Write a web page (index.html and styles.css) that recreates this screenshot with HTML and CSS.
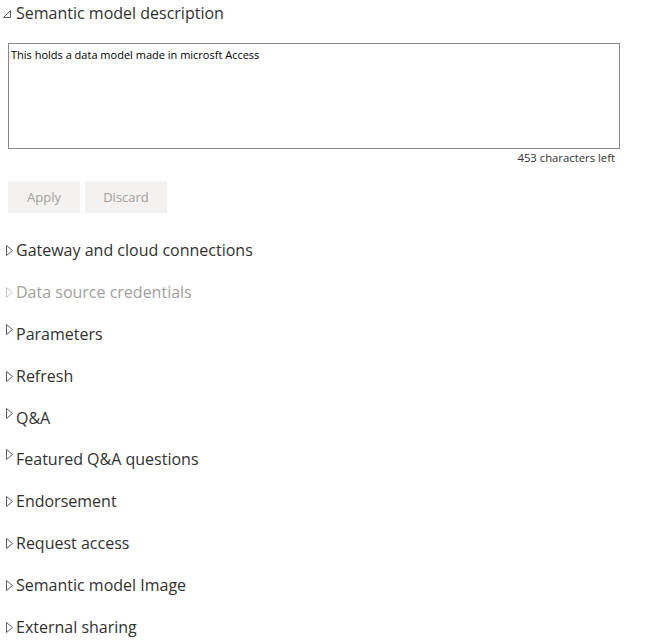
FILE: index.html
```html
<!DOCTYPE html>
<html lang="en">
  <head>
    <title>Semantic model settings</title>
    <meta name="viewport" content="width=device-width, initial-scale=1.0">
    <link rel="stylesheet" href="styles.css">
  </head>
  <body>
    <div class="section open">
      <div class="section-head">
        <svg class="chev-open" width="8" height="8" viewBox="0 0 8 8"><path d="M7.5 0.5 L7.5 7.5 L0.5 7.5 Z" fill="none" stroke="#605e5c" stroke-width="1"/></svg>
        <span>Semantic model description</span>
      </div>
      <div class="desc-box">
        <textarea class="desc-input">This holds a data model made in microsft Access</textarea>
        <div class="char-count">453 characters left</div>
      </div>
      <div class="btn-row">
        <button class="btn" disabled>Apply</button>
        <button class="btn" disabled>Discard</button>
      </div>
    </div>

    <div class="section-list">
      <div class="section-head"><svg class="chev" width="7" height="11" viewBox="0 0 7 11"><path d="M0.5 0.5 L6.5 5.5 L0.5 10.5 Z" fill="none" stroke="#605e5c"/></svg><span>Gateway and cloud connections</span></div>
      <div class="section-head muted"><svg class="chev" width="7" height="11" viewBox="0 0 7 11"><path d="M0.5 0.5 L6.5 5.5 L0.5 10.5 Z" fill="none" stroke="#c8c6c4"/></svg><span>Data source credentials</span></div>
      <div class="section-head"><svg class="chev high" width="7" height="11" viewBox="0 0 7 11"><path d="M0.5 0.5 L6.5 5.5 L0.5 10.5 Z" fill="none" stroke="#605e5c"/></svg><span>Parameters</span></div>
      <div class="section-head"><svg class="chev" width="7" height="11" viewBox="0 0 7 11"><path d="M0.5 0.5 L6.5 5.5 L0.5 10.5 Z" fill="none" stroke="#605e5c"/></svg><span>Refresh</span></div>
      <div class="section-head"><svg class="chev high" width="7" height="11" viewBox="0 0 7 11"><path d="M0.5 0.5 L6.5 5.5 L0.5 10.5 Z" fill="none" stroke="#605e5c"/></svg><span>Q&amp;A</span></div>
      <div class="section-head"><svg class="chev high" width="7" height="11" viewBox="0 0 7 11"><path d="M0.5 0.5 L6.5 5.5 L0.5 10.5 Z" fill="none" stroke="#605e5c"/></svg><span>Featured Q&amp;A questions</span></div>
      <div class="section-head"><svg class="chev" width="7" height="11" viewBox="0 0 7 11"><path d="M0.5 0.5 L6.5 5.5 L0.5 10.5 Z" fill="none" stroke="#605e5c"/></svg><span>Endorsement</span></div>
      <div class="section-head"><svg class="chev" width="7" height="11" viewBox="0 0 7 11"><path d="M0.5 0.5 L6.5 5.5 L0.5 10.5 Z" fill="none" stroke="#605e5c"/></svg><span>Request access</span></div>
      <div class="section-head"><svg class="chev" width="7" height="11" viewBox="0 0 7 11"><path d="M0.5 0.5 L6.5 5.5 L0.5 10.5 Z" fill="none" stroke="#605e5c"/></svg><span>Semantic model Image</span></div>
      <div class="section-head"><svg class="chev" width="7" height="11" viewBox="0 0 7 11"><path d="M0.5 0.5 L6.5 5.5 L0.5 10.5 Z" fill="none" stroke="#605e5c"/></svg><span>External sharing</span></div>
    </div>
  </body>
</html>
```

FILE: styles.css
```css
body {
  margin: 0;
  font-family: "Open Sans", "Noto Sans", sans-serif;
  color: #323130;
  background: #fff;
}
.section-head {
  display: flex;
  align-items: center;
  height: 26px;
  font-size: 16px;
  gap: 3px;
}
.open .section-head {
  padding-left: 3px;
  gap: 5px;
}
.chev-open {
  margin-top: 2px;
}
.chev {
  margin-left: 6px;
  margin-top: 1px;
}
.chev.high {
  align-self: flex-start;
  margin-top: 3px;
}
.muted {
  color: #a19f9d;
}
.desc-box {
  margin: 17px 0 0 8px;
  width: 612px;
}
.desc-input {
  display: block;
  box-sizing: border-box;
  width: 612px;
  height: 106px;
  border: 1px solid #8a8886;
  border-radius: 0;
  padding: 3px 2px;
  font-family: "Open Sans", sans-serif;
  font-size: 11px;
  color: #000;
  resize: none;
}
.char-count {
  text-align: right;
  font-size: 11.3px;
  padding-right: 5px;
  margin-top: 1px;
}
.btn-row {
  display: flex;
  gap: 5px;
  margin: 16px 0 0 8px;
}
.btn {
  height: 32px;
  border: none;
  background: #f3f2f1;
  color: #a19f9d;
  font-family: "Open Sans", sans-serif;
  font-size: 13px;
  padding: 0;
}
.btn:first-child { width: 72px; }
.btn:last-child { width: 82px; }
.section-list {
  margin-top: 24px;
  display: flex;
  flex-direction: column;
  gap: 15.9px;
}
```
